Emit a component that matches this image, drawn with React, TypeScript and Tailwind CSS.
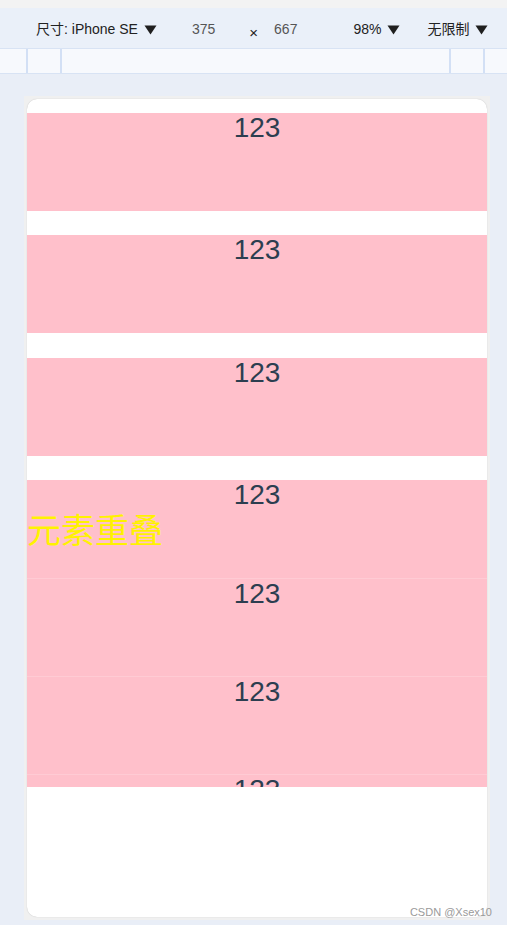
import React from "react";

const Caret = () => (
  <svg width="13" height="10" viewBox="0 0 13 10" className="inline-block">
    <path d="M0.5 0.5 H12.5 L6.5 9.5 Z" fill="#1f1f1f" />
  </svg>
);

const Block = ({ className = "" }: { className?: string }) => (
  <div
    className={`h-[98px] w-full shrink-0 bg-[#ffc0cb] text-center text-[28px] leading-[29px] text-[#2c3e50] ${className}`}
    style={{ fontFamily: '"Liberation Sans", Arial, sans-serif' }}
  >
    123
  </div>
);

export default function App() {
  return (
    <div
      className="relative flex h-[925px] w-full flex-col overflow-hidden bg-[#e9eef7]"
      style={{ fontFamily: '"Liberation Sans", "Noto Sans CJK SC", sans-serif' }}
    >
      {/* window strip */}
      <div className="h-[8px] shrink-0 bg-[#f3f3f3]" />

      {/* device toolbar */}
      <div className="flex h-[41px] shrink-0 items-center border-b border-[#d8e3f4] bg-[#eaf0f9] pt-[3px] text-[14px] text-[#222]">
        <div className="ml-[36px] flex items-center gap-[6px]">
          <span>尺寸: iPhone SE</span>
          <Caret />
        </div>
        <div className="ml-[35px] text-[#555]">375</div>
        <div className="ml-[34px] mt-[6px] text-[15px] leading-none text-[#222]">×</div>
        <div className="ml-[16px] text-[#555]">667</div>
        <div className="ml-[56px] flex items-center gap-[6px]">
          <span>98%</span>
          <Caret />
        </div>
        <div className="ml-[27px] flex items-center gap-[6px]">
          <span>无限制</span>
          <Caret />
        </div>
      </div>

      {/* ruler row */}
      <div className="flex h-[25px] shrink-0 border-b border-[#d8e3f4] bg-[#f7f9fd]">
        <div className="ml-[26px] w-[2px] bg-[#d3e0f5]" />
        <div className="ml-[32px] w-[2px] bg-[#d3e0f5]" />
        <div className="ml-[387px] w-[2px] bg-[#d3e0f5]" />
        <div className="ml-[32px] w-[2px] bg-[#d3e0f5]" />
      </div>

      {/* device viewport */}
      <div className="ml-[24px] mt-[22px] h-[824px] w-[466px] bg-[#f0f0f0] p-[3px]">
        <div className="h-full w-full overflow-hidden rounded-[10px] bg-white pt-[14px] shadow-[0_0_1px_rgba(0,0,0,0.25)]">
          <div className="flex h-[674px] flex-col overflow-hidden">
            <Block className="mb-[24px]" />
            <Block className="mb-[24.5px]" />
            <Block className="mb-[24px]" />
            <div className="relative">
              <Block />
              <div
                className="absolute left-0 top-[32px] text-[34px] leading-none text-[#fff200]"
                style={{ fontFamily: '"Noto Sans CJK SC", sans-serif' }}
              >
                元素重叠
              </div>
            </div>
            <Block className="border-t border-[#ffcbd4]" />
            <Block className="border-t border-[#ffcbd4]" />
            <Block className="border-t border-[#ffcbd4]" />
          </div>
        </div>
      </div>

      <div className="absolute bottom-[7px] right-[15px] text-[11px] leading-none text-[#9a9a9a]">
        CSDN @Xsex10
      </div>
    </div>
  );
}
